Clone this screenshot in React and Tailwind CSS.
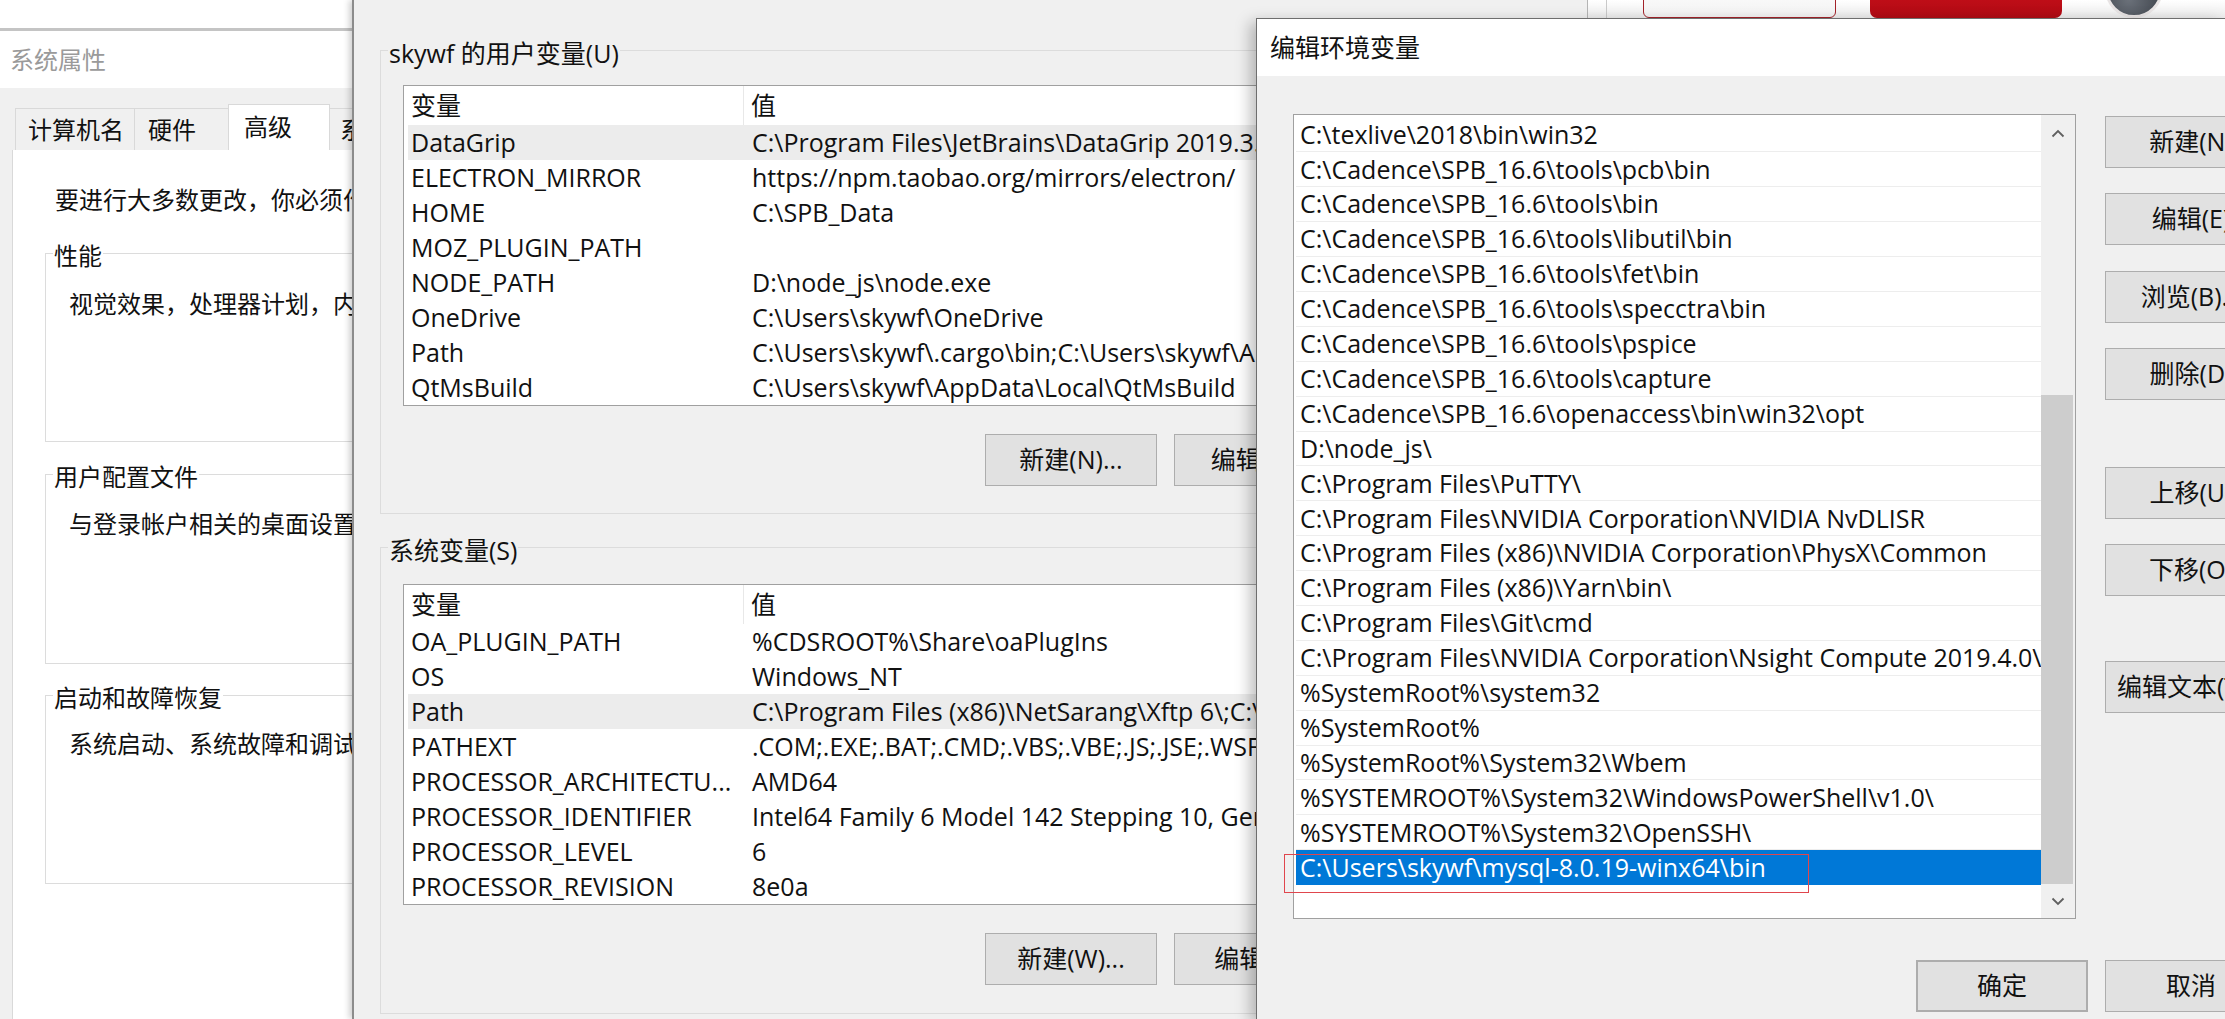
import clsx from "clsx";

const userVars = [
  ["DataGrip", "C:\\Program Files\\JetBrains\\DataGrip 2019.3.3\\bin;"],
  ["ELECTRON_MIRROR", "https://npm.taobao.org/mirrors/electron/"],
  ["HOME", "C:\\SPB_Data"],
  ["MOZ_PLUGIN_PATH", ""],
  ["NODE_PATH", "D:\\node_js\\node.exe"],
  ["OneDrive", "C:\\Users\\skywf\\OneDrive"],
  ["Path", "C:\\Users\\skywf\\.cargo\\bin;C:\\Users\\skywf\\AppData\\Local\\Microsoft\\WindowsApps;"],
  ["QtMsBuild", "C:\\Users\\skywf\\AppData\\Local\\QtMsBuild"],
];

const sysVars = [
  ["OA_PLUGIN_PATH", "%CDSROOT%\\Share\\oaPlugIns"],
  ["OS", "Windows_NT"],
  ["Path", "C:\\Program Files (x86)\\NetSarang\\Xftp 6\\;C:\\Program Files (x86)\\Common Files\\Oracle\\Java\\javapath;"],
  ["PATHEXT", ".COM;.EXE;.BAT;.CMD;.VBS;.VBE;.JS;.JSE;.WSF;.WSH;.MSC"],
  ["PROCESSOR_ARCHITECTU...", "AMD64"],
  ["PROCESSOR_IDENTIFIER", "Intel64 Family 6 Model 142 Stepping 10, GenuineIntel"],
  ["PROCESSOR_LEVEL", "6"],
  ["PROCESSOR_REVISION", "8e0a"],
];

const paths = [
  "C:\\texlive\\2018\\bin\\win32",
  "C:\\Cadence\\SPB_16.6\\tools\\pcb\\bin",
  "C:\\Cadence\\SPB_16.6\\tools\\bin",
  "C:\\Cadence\\SPB_16.6\\tools\\libutil\\bin",
  "C:\\Cadence\\SPB_16.6\\tools\\fet\\bin",
  "C:\\Cadence\\SPB_16.6\\tools\\specctra\\bin",
  "C:\\Cadence\\SPB_16.6\\tools\\pspice",
  "C:\\Cadence\\SPB_16.6\\tools\\capture",
  "C:\\Cadence\\SPB_16.6\\openaccess\\bin\\win32\\opt",
  "D:\\node_js\\",
  "C:\\Program Files\\PuTTY\\",
  "C:\\Program Files\\NVIDIA Corporation\\NVIDIA NvDLISR",
  "C:\\Program Files (x86)\\NVIDIA Corporation\\PhysX\\Common",
  "C:\\Program Files (x86)\\Yarn\\bin\\",
  "C:\\Program Files\\Git\\cmd",
  "C:\\Program Files\\NVIDIA Corporation\\Nsight Compute 2019.4.0\\",
  "%SystemRoot%\\system32",
  "%SystemRoot%",
  "%SystemRoot%\\System32\\Wbem",
  "%SYSTEMROOT%\\System32\\WindowsPowerShell\\v1.0\\",
  "%SYSTEMROOT%\\System32\\OpenSSH\\",
  "C:\\Users\\skywf\\mysql-8.0.19-winx64\\bin",
];

// group box with the label sitting on the top border
const GroupBox = ({ label, labelBg, className, children }) => (
  <div className={clsx("relative shrink-0 border border-[#dcdcdc]", className)}>
    <span className={clsx("absolute -top-[14px] left-[7px] px-[1px] leading-[32px] whitespace-nowrap", labelBg)}>
      {label}
    </span>
    {children}
  </div>
);

const Button = ({ children, className }) => (
  <div
    className={clsx(
      "shrink-0 w-[172px] h-[52px] flex items-center justify-center bg-[#e1e1e1] border border-[#adadad] whitespace-nowrap",
      className
    )}
  >
    {children}
  </div>
);

const VarTable = ({ rows, selected }) => (
  <div className="w-[1120px] border border-[#a0a0a0] bg-white">
    <div className="flex h-[39px] items-center">
      <div className="w-[339px] shrink-0 pl-[7px]">变量</div>
      <div className="h-full flex items-center border-l border-[#e8e8e8] pl-[7px]">值</div>
    </div>
    {rows.map(([name, value], i) => (
      <div
        key={name + i}
        className={clsx("flex h-[35px] items-center ml-[4px] whitespace-nowrap", i === selected && "bg-[#ececec]")}
      >
        <div className="w-[335px] shrink-0 pl-[3px] overflow-hidden">{name}</div>
        <div className="pl-[9px]">{value}</div>
      </div>
    ))}
  </div>
);

const Chevron = ({ up }) => (
  <svg width="14" height="9" viewBox="0 0 14 9" fill="none">
    <polyline
      points={up ? "1.5,7.5 7,2 12.5,7.5" : "1.5,1.5 7,7 12.5,1.5"}
      stroke="#606060"
      strokeWidth="1.8"
    />
  </svg>
);

const SystemProps = () => (
  <div className="absolute left-0 top-0 w-[352px] h-full flex flex-col overflow-hidden text-[24px]">
    <div className="h-[28px] shrink-0 bg-white" />
    <div className="h-[3px] shrink-0 bg-[#c4c4c4]" />
    <div className="h-[57px] shrink-0 bg-white flex items-center pl-[10px] text-[#9a9a9a]">系统属性</div>
    <div className="flex-1 flex flex-col bg-[#f0f0f0] pl-[12px] pt-[16px]">
      <div className="flex items-end h-[46px] pl-[3px] whitespace-nowrap">
        <div className="w-[119px] h-[42px] shrink-0 flex items-center pl-[12px] border-l border-t border-[#d9d9d9]">计算机名</div>
        <div className="w-[94px] h-[42px] shrink-0 flex items-center pl-[13px] border-l border-t border-[#d9d9d9]">硬件</div>
        <div className="w-[102px] h-[46px] shrink-0 flex items-center pl-[15px] pb-[2px] bg-white border-l border-t border-r border-[#d9d9d9]">
          高级
        </div>
        <div className="w-[120px] h-[42px] shrink-0 flex items-center pl-[10px] border-t border-[#d9d9d9]">系统保护</div>
      </div>
      <div className="flex-1 flex flex-col bg-white border-l border-[#d9d9d9] pl-[32px] pt-[34px] whitespace-nowrap">
        <div className="h-[32px] leading-[32px] ml-[10px]">要进行大多数更改，你必须作为管理员登录。</div>
        <GroupBox label="性能" labelBg="bg-white" className="w-[400px] h-[189px] mt-[37px] pl-[23px] pt-[34px]">
          <div className="leading-[32px]">视觉效果，处理器计划，内存使用，以及虚拟内存</div>
        </GroupBox>
        <GroupBox label="用户配置文件" labelBg="bg-white" className="w-[400px] h-[190px] mt-[32px] pl-[23px] pt-[33px]">
          <div className="leading-[32px]">与登录帐户相关的桌面设置</div>
        </GroupBox>
        <GroupBox label="启动和故障恢复" labelBg="bg-white" className="w-[400px] h-[189px] mt-[31px] pl-[23px] pt-[32px]">
          <div className="leading-[32px]">系统启动、系统故障和调试信息</div>
        </GroupBox>
      </div>
    </div>
  </div>
);

const EnvVars = () => (
  <div className="absolute left-[352px] top-0 w-[1236px] h-full flex flex-col overflow-hidden bg-[#f0f0f0] border-l-2 border-r border-l-[#8c8c8c] border-r-[#b4b4b4] shadow-[-3px_0_6px_rgba(0,0,0,0.18)] pl-[26px]">
    <GroupBox label="skywf 的用户变量(U)" labelBg="bg-[#f0f0f0]" className="w-[1180px] mt-[50px] pl-[22px] pt-[34px] pb-[27px] border-r-0">
      <VarTable rows={userVars} selected={0} />
      <div className="flex gap-[17px] mt-[28px] ml-[582px]">
        <Button>新建(N)...</Button>
        <Button>编辑(E)...</Button>
        <Button>删除(D)</Button>
      </div>
    </GroupBox>
    <GroupBox label="系统变量(S)" labelBg="bg-[#f0f0f0]" className="w-[1180px] mt-[33px] pl-[22px] pt-[36px] pb-[28px] border-r-0">
      <VarTable rows={sysVars} selected={2} />
      <div className="flex gap-[17px] mt-[28px] ml-[582px]">
        <Button>新建(W)...</Button>
        <Button>编辑(I)...</Button>
        <Button>删除(L)</Button>
      </div>
    </GroupBox>
  </div>
);

const BackgroundPage = () => (
  <div className="absolute left-[1588px] top-0 right-0 h-[18px] flex items-end overflow-hidden bg-gradient-to-b from-white to-[#ececec]">
    <div className="w-[19px] h-full shrink-0 border-r border-[#c9c9c9]" />
    <div className="ml-[36px] w-[193px] h-[40px] shrink-0 rounded-b-[6px] border border-[#a3232a] bg-gradient-to-b from-white to-[#f3f3f3]" />
    <div className="ml-[34px] w-[192px] h-[40px] shrink-0 rounded-b-[7px] bg-gradient-to-b from-[#d0101b] to-[#b00b14]" />
    <div className="ml-[43px] w-[58px] h-[58px] shrink-0 rounded-full border-[3px] border-[#e8e4e4] bg-[radial-gradient(circle_at_40%_70%,#6b717a,#2f343b)]" />
  </div>
);

const EditPathDialog = () => (
  <div className="absolute left-[1256px] top-[18px] right-0 bottom-0 flex flex-col border-l border-t border-[#6e6e6e] shadow-[-6px_4px_14px_rgba(0,0,0,0.25)]">
    <div className="h-[57px] shrink-0 bg-white flex items-center pl-[13px]">编辑环境变量</div>
    <div className="flex-1 bg-[#f0f0f0] pl-[36px] pt-[38px]">
      <div className="flex">
        <div className="w-[783px] h-[805px] shrink-0 flex border border-[#a0a0a0] bg-white">
          <div className="flex-1 pl-[2px] pt-[2.5px] whitespace-nowrap overflow-hidden">
            {paths.map((p, i) => (
              <div
                key={p}
                className={clsx(
                  "h-[34.9px] flex items-center pl-[4px]",
                  i === paths.length - 1 ? "bg-[#0078d7] text-white" : "border-b border-[#ededed]"
                )}
              >
                {p}
              </div>
            ))}
          </div>
          <div className="w-[34px] shrink-0 flex flex-col bg-[#f0f0f0]">
            <div className="h-[37px] flex items-center justify-center">
              <Chevron up />
            </div>
            <div className="flex-1" />
            <div className="h-[489px] bg-[#cdcdcd] mr-[2px]" />
            <div className="h-[34px] flex items-center justify-center">
              <Chevron />
            </div>
          </div>
        </div>
        <div className="ml-[29px] pt-[2px] flex flex-col">
          <Button className="h-[51px]">新建(N)</Button>
          <Button className="h-[51px] mt-[25px]">编辑(E)</Button>
          <Button className="h-[52px] mt-[26px]">浏览(B)...</Button>
          <Button className="h-[51px] mt-[25px]">删除(D)</Button>
          <Button className="h-[51px] mt-[67px]">上移(U)</Button>
          <Button className="h-[51px] mt-[25px]">下移(O)</Button>
          <Button className="h-[51px] mt-[65px]">编辑文本(T)...</Button>
        </div>
      </div>
      <div className="flex gap-[17px] mt-[41px] ml-[623px]">
        <Button className="border-2 border-[#0078d7]">确定</Button>
        <Button>取消</Button>
      </div>
    </div>
  </div>
);

export default function App() {
  return (
    <div className="relative w-[2225px] h-[1019px] overflow-hidden bg-[#f0f0f0] text-[25px] text-[#111] font-['Open_Sans','Noto_Sans_CJK_SC',sans-serif]">
      <SystemProps />
      <EnvVars />
      <BackgroundPage />
      <EditPathDialog />
      {/* red annotation box around the new entry */}
      <div className="absolute left-[1284px] top-[854px] w-[525px] h-[39px] border border-[#e0464d]" />
    </div>
  );
}
